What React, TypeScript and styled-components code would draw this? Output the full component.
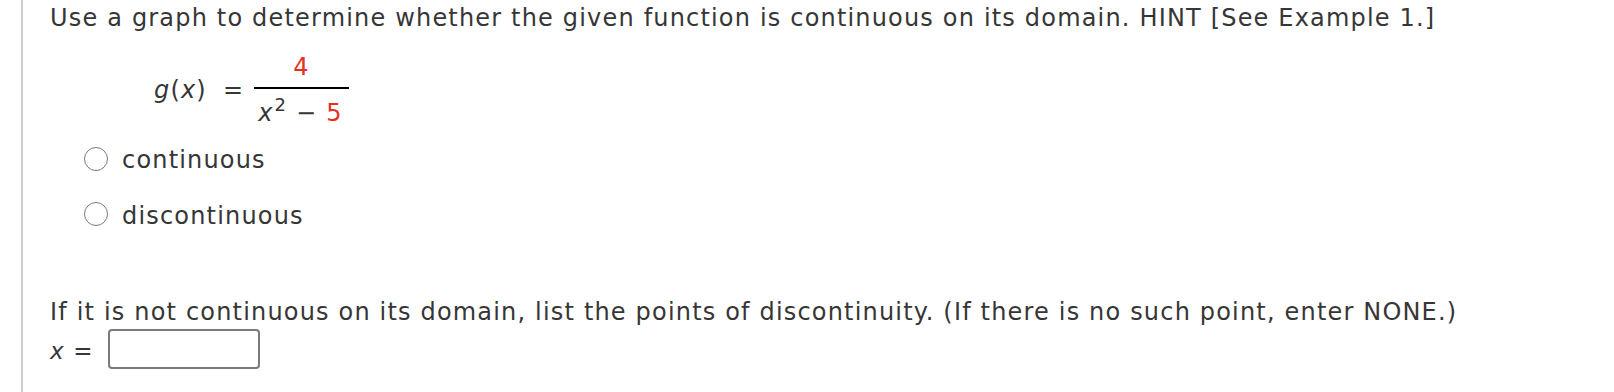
import React from "react";
import styled, { createGlobalStyle } from "styled-components";

const Global = createGlobalStyle`
  html, body { margin: 0; padding: 0; background: #fff; }
  body { font-family: "DejaVu Sans", Verdana, sans-serif; color: #363636; }
`;

const Page = styled.div`
  margin-left: 21px;
  border-left: 2px solid #cfcfcf;
  min-height: 392px;
  box-sizing: border-box;
  padding: 4px 0 0 27px;
  display: flex;
  flex-direction: column;
  align-items: flex-start;
  font-size: 24px;
  line-height: 28px;
  letter-spacing: 1.18px;
`;

const Para = styled.div<{ $top?: number }>`
  margin-top: ${(p) => p.$top ?? 0}px;
  white-space: nowrap;
`;

const FormulaRow = styled.div`
  margin: 21px 0 0 104px;
  display: flex;
  align-items: center;
`;

const MathIt = styled.span`
  font-style: italic;
`;

const Eq = styled.span`
  margin: 0 10px 0 16px;
`;

const Fraction = styled.span`
  display: inline-flex;
  flex-direction: column;
  align-items: center;
`;

const Num = styled.span`
  line-height: 28px;
`;

const Bar = styled.span`
  align-self: stretch;
  height: 2px;
  background: #000;
  margin: 6px 0 10px;
`;

const Den = styled.span`
  padding: 0 6px 0 4px;
  line-height: 28px;
`;

const Red = styled.span`
  color: #e8301f;
`;

const Sup = styled.sup`
  font-size: 18px;
  line-height: 0;
  vertical-align: 10px;
  margin-left: 1px;
`;

const Options = styled.div`
  margin: 19px 0 0 34px;
  display: flex;
  flex-direction: column;
  gap: 27.5px;
`;

const Option = styled.label`
  display: flex;
  align-items: center;
  gap: 14px;
  line-height: 28px;
`;

const Radio = styled.span`
  width: 24px;
  height: 24px;
  box-sizing: border-box;
  border: 1.6px solid #7a7a7a;
  border-radius: 50%;
  margin-top: -3px;
  background: #fff;
`;

const AnswerRow = styled.div`
  margin-top: 3px;
  display: flex;
  align-items: flex-end;
`;

const AnsLabel = styled.span`
  font-size: 23px;
  line-height: 26px;
  margin: 0 14px 5px 0;
  white-space: pre;
`;

const Input = styled.input`
  width: 152px;
  height: 40px;
  box-sizing: border-box;
  border: 2px solid #7b7b7b;
  border-radius: 4px;
  background: #fff;
  outline: none;
`;

export default function App() {
  return (
    <>
      <Global />
      <Page>
        <Para>
          Use a graph to determine whether the given function is continuous on its domain. HINT [See Example 1.]
        </Para>
        <FormulaRow>
          <MathIt>g</MathIt>(<MathIt>x</MathIt>)
          <Eq>=</Eq>
          <Fraction>
            <Num>
              <Red>4</Red>
            </Num>
            <Bar />
            <Den>
              <MathIt>x</MathIt>
              <Sup>2</Sup> − <Red>5</Red>
            </Den>
          </Fraction>
        </FormulaRow>
        <Options>
          <Option>
            <Radio />
            continuous
          </Option>
          <Option>
            <Radio />
            discontinuous
          </Option>
        </Options>
        <Para $top={68}>
          If it is not continuous on its domain, list the points of discontinuity. (If there is no such point, enter NONE.)
        </Para>
        <AnswerRow>
          <AnsLabel>
            <MathIt>x</MathIt> =
          </AnsLabel>
          <Input type="text" />
        </AnswerRow>
      </Page>
    </>
  );
}
